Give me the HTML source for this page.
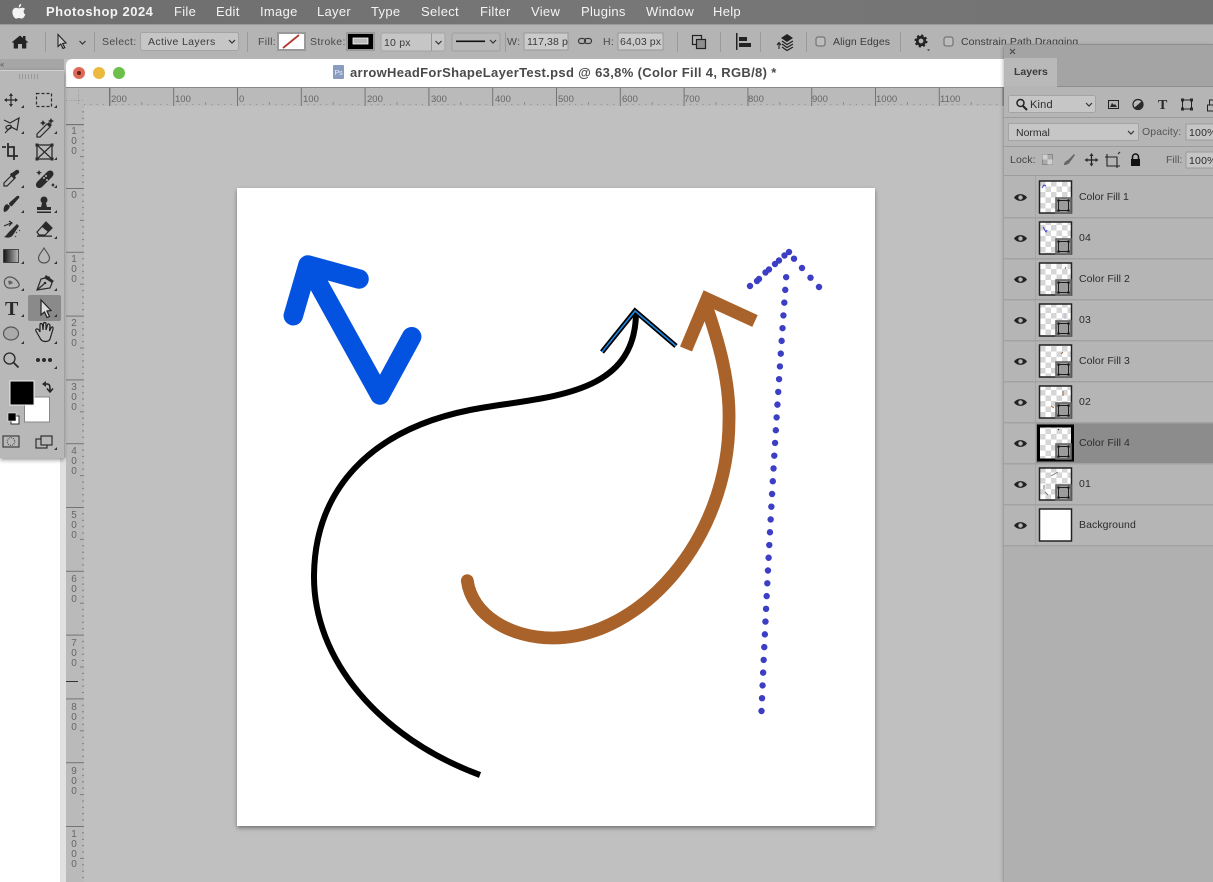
<!DOCTYPE html>
<html><head><meta charset="utf-8"><style>
html,body{margin:0;padding:0;background:#c0c0c0;overflow:hidden}
svg{display:block;position:absolute;left:0;top:0;filter:blur(.3px)}
text{font-family:"Liberation Sans",sans-serif;font-size:10.5px;fill:#333;letter-spacing:.35px}
.m{font-size:13px;fill:#f4f4f4;letter-spacing:.3px}
.r{font-size:9.5px;fill:#666;letter-spacing:0}
.v{font-size:10px;fill:#666;letter-spacing:0;text-anchor:middle}
.o{fill:#3c3c3c}
.l{fill:#2c2c2c;font-size:10.5px;letter-spacing:.2px}
.ic{fill:none;stroke:#2a2a2a;stroke-width:1.2}
.f{fill:#2a2a2a;stroke:none}
</style></head><body>
<svg width="1213" height="882" viewBox="0 0 1213 882" xmlns="http://www.w3.org/2000/svg">
<defs>
<linearGradient id="mb" x1="0" y1="0" x2="1" y2="0"><stop offset="0" stop-color="#6d6d6d"/><stop offset=".5" stop-color="#777"/><stop offset="1" stop-color="#737373"/></linearGradient>
<linearGradient id="gr" x1="0" y1="0" x2="1" y2="0"><stop offset="0" stop-color="#111"/><stop offset="1" stop-color="#bbb"/></linearGradient>
<filter id="sh" x="-5%" y="-5%" width="110%" height="110%"><feDropShadow dx="0" dy="2" stdDeviation="2" flood-color="#000" flood-opacity=".4"/></filter>
<pattern id="ck" x="1040" y="181" width="11" height="11" patternUnits="userSpaceOnUse"><rect width="11" height="11" fill="#fff"/><rect width="5.5" height="5.5" fill="#d6d6d6"/><rect x="5.5" y="5.5" width="5.5" height="5.5" fill="#d6d6d6"/></pattern>
<pattern id="hr" x="237" y="88" width="63.8" height="18" patternUnits="userSpaceOnUse">
<rect x="0" y="0" width="1" height="18" fill="#747474"/>
<g fill="#8a8a8a"><rect x="6.4" y="16" width="1" height="1"/><rect x="12.8" y="16" width="1" height="1"/><rect x="19.1" y="16" width="1" height="1"/><rect x="25.5" y="16" width="1" height="1"/><rect x="31.9" y="14" width="1" height="3"/><rect x="38.3" y="16" width="1" height="1"/><rect x="44.7" y="16" width="1" height="1"/><rect x="51" y="16" width="1" height="1"/><rect x="57.4" y="16" width="1" height="1"/></g></pattern>
<pattern id="vr" x="66" y="188" width="18" height="63.8" patternUnits="userSpaceOnUse">
<rect x="0" y="0" width="18" height="1" fill="#747474"/>
<g fill="#7e7e7e"><rect x="16" y="6.4" width="2" height="1"/><rect x="16" y="12.8" width="2" height="1"/><rect x="16" y="19.1" width="2" height="1"/><rect x="16" y="25.5" width="2" height="1"/><rect x="14" y="31.9" width="4" height="1"/><rect x="16" y="38.3" width="2" height="1"/><rect x="16" y="44.7" width="2" height="1"/><rect x="16" y="51" width="2" height="1"/><rect x="16" y="57.4" width="2" height="1"/></g></pattern>
<g id="mask"><rect x="0" y="0" width="15" height="15" fill="#9c9c9c" stroke="#666" stroke-width="1.6"/><rect x="2.5" y="2.5" width="10" height="10" fill="none" stroke="#1c1c1c" stroke-width="1"/><g fill="#1c1c1c"><circle cx="2.5" cy="2.5" r="1.3"/><circle cx="12.5" cy="2.5" r="1.3"/><circle cx="2.5" cy="12.5" r="1.3"/><circle cx="12.5" cy="12.5" r="1.3"/></g></g>
<path id="eye" d="M-6.5,0C-3.5,-4.5 3.5,-4.5 6.5,0C3.5,4.5 -3.5,4.5 -6.5,0ZM0,-2.2A2.2,2.2 0 1 0 0.01,-2.2Z" fill="#222" fill-rule="evenodd"/>
<path id="cor" d="M0,3L3,3L3,0Z" fill="#333"/>
</defs>

<!-- base -->
<rect width="1213" height="882" fill="#c0c0c0"/>
<rect width="1213" height="24" fill="url(#mb)"/>
<rect y="24" width="1213" height="1" fill="#9a9a9a"/>
<rect y="25" width="1213" height="34" fill="#b4b4b4"/>

<!-- menu -->
<path transform="translate(0,-2)" d="M18.9,9.6C19.9,9.5 21,8.6 21.3,5.8C19.7,6 18.5,7.4 18.9,9.6ZM19,10.4C18,10.4 17.2,9.8 16.2,9.8C14.3,9.8 12.4,11.4 12.4,14.2C12.4,17.4 14.6,20.6 16.2,20.6C17.3,20.6 17.9,20 19,20C20.1,20 20.6,20.6 21.8,20.6C23.3,20.6 24.7,18.2 25.4,16.4C23.3,15.6 23,12 25.1,11C24.3,10 23.1,9.8 22.3,9.8C21,9.8 20,10.4 19,10.4Z" fill="#f4f4f4"/>
<text class="m" x="46" y="16" style="font-weight:700;letter-spacing:.5px">Photoshop 2024</text>
<text class="m" x="174" y="16">File</text>
<text class="m" x="216" y="16">Edit</text>
<text class="m" x="260" y="16">Image</text>
<text class="m" x="317" y="16">Layer</text>
<text class="m" x="371" y="16">Type</text>
<text class="m" x="421" y="16">Select</text>
<text class="m" x="480" y="16">Filter</text>
<text class="m" x="531" y="16">View</text>
<text class="m" x="581" y="16">Plugins</text>
<text class="m" x="646" y="16">Window</text>
<text class="m" x="713" y="16">Help</text>

<!-- options bar -->
<path d="M11.5,42.5L20,35.5L23,38L23,36L25.5,36L25.5,40L28.5,42.5L26.3,42.5L26.3,48.5L22,48.5L22,44L18,44L18,48.5L13.7,48.5L13.7,42.5Z" fill="#222"/>
<g fill="#9a9a9a"><rect x="45" y="32" width="1" height="20"/><rect x="94" y="32" width="1" height="20"/><rect x="247" y="32" width="1" height="20"/><rect x="505" y="32" width="1" height="20"/><rect x="677" y="32" width="1" height="20"/><rect x="720" y="32" width="1" height="20"/><rect x="760" y="32" width="1" height="20"/><rect x="806" y="32" width="1" height="20"/><rect x="900" y="32" width="1" height="20"/></g>
<path d="M58,34.5L58,46.5L60.8,44L63,48.5L64.8,47.6L62.6,43.4L66,43Z" fill="#c8c8c8" stroke="#222" stroke-width="1.1"/>
<path d="M79.5,41L82.5,44L85.5,41" fill="none" stroke="#333" stroke-width="1.2"/>
<text class="o" x="102" y="45" style="fill:#4a4a4a">Select:</text>
<rect x="140.5" y="32.5" width="98" height="18" rx="2" fill="#c6c6c6" stroke="#a4a4a4"/>
<text class="o" x="148" y="45">Active Layers</text>
<path d="M229,40L232,43L235,40" fill="none" stroke="#333" stroke-width="1.2"/>
<text class="o" x="258" y="45" style="fill:#4a4a4a">Fill:</text>
<rect x="277" y="32" width="29" height="19" fill="#999"/><rect x="279" y="34" width="25" height="15" fill="#fff"/><path d="M283,48L299,35" stroke="#b13a32" stroke-width="1.8"/>
<text class="o" x="310" y="45" style="fill:#4a4a4a">Stroke:</text>
<rect x="346" y="32" width="29" height="19" fill="#999"/><rect x="348" y="34" width="25" height="15" fill="#000"/><rect x="353" y="38" width="15" height="6" fill="#bbb" stroke="#fff" stroke-width=".8"/>
<rect x="381" y="33" width="64" height="18" rx="2" fill="#c6c6c6" stroke="#a4a4a4"/><rect x="431" y="33" width="1" height="18" fill="#999"/>
<text class="o" x="384" y="46" style="letter-spacing:.2px">10 px</text>
<path d="M435.5,41L438.5,44L441.5,41" fill="none" stroke="#333" stroke-width="1.2"/>
<rect x="452" y="33" width="48" height="18" rx="2" fill="#b8b8b8" stroke="#a0a0a0"/>
<rect x="456" y="40.5" width="29" height="1.6" fill="#111"/>
<path d="M490,40L493,43L496,40" fill="none" stroke="#333" stroke-width="1.2"/>
<text class="o" x="507" y="45" style="fill:#4a4a4a">W:</text>
<rect x="524" y="33" width="44" height="17" fill="#cbcbcb" stroke="#999"/>
<text class="o" x="527" y="45" style="letter-spacing:.1px">117,38 p</text>
<g fill="none" stroke="#3a3a3a" stroke-width="1.2"><rect x="578.5" y="38.5" width="7" height="5" rx="2.5"/><rect x="584.5" y="38.5" width="7" height="5" rx="2.5"/></g>
<text class="o" x="603" y="45" style="fill:#4a4a4a">H:</text>
<rect x="618" y="33" width="45" height="17" fill="#cbcbcb" stroke="#999"/>
<text class="o" x="620" y="45" style="letter-spacing:.1px">64,03 px</text>
<g stroke="#222" stroke-width="1.2"><rect x="692.5" y="35.5" width="9" height="9" fill="#b4b4b4"/><rect x="696.5" y="39.5" width="9" height="9" fill="#8f8f8f"/></g>
<rect x="736" y="33" width="1.5" height="17" fill="#222"/><rect x="739" y="37" width="8" height="4" fill="#222"/><rect x="739" y="43" width="12" height="4" fill="#222"/>
<path d="M779,49v-6M777,45l2,-2.5l2,2.5" fill="none" stroke="#222" stroke-width="1.1"/>
<g fill="#222"><path d="M787,34L793,38L787,42L781,38Z"/></g><g fill="none" stroke="#222" stroke-width="1.3"><path d="M782,41L787,44.5L793,41M782,44L787,47.5L793,44M782,47L787,50.5L793,47"/></g>
<rect x="816" y="37" width="9" height="9" rx="2" fill="#bcbcbc" stroke="#666"/>
<text class="o" x="833" y="45" style="letter-spacing:.1px">Align Edges</text>
<circle cx="921" cy="41" r="3.8" fill="none" stroke="#222" stroke-width="2.8"/><circle cx="921" cy="41" r="5.6" fill="none" stroke="#222" stroke-width="1.8" stroke-dasharray="2.2 2.2"/>
<path d="M927,49.5L930,49.5L928.5,51Z" fill="#222"/>
<rect x="944" y="37" width="9" height="9" rx="2" fill="#bcbcbc" stroke="#666"/>
<text class="o" x="961" y="45" style="letter-spacing:.1px">Constrain Path Dragging</text>

<!-- left edge + bottom white under tools -->
<rect x="0" y="458" width="66" height="424" fill="#fff"/>
<rect x="60" y="458" width="6" height="424" fill="#e0e0e0"/>

<!-- document bar -->
<path d="M66,87L66,66Q66,59 73,59L1004,59L1004,87Z" fill="#fff"/>
<rect x="66" y="87" width="938" height="1" fill="#888"/>
<circle cx="79" cy="73" r="6" fill="#dc6a58"/><circle cx="79" cy="73" r="2" fill="#6e1d14"/>
<circle cx="99" cy="73" r="6" fill="#ecb940"/>
<circle cx="119" cy="73" r="6" fill="#6cc04a"/>
<rect x="333" y="65" width="11" height="14" rx="1" fill="#8a9cc0"/><text x="334.5" y="75" style="font-size:7px;fill:#e8eefc;letter-spacing:0">Ps</text>
<text x="350" y="77" style="font-size:13px;font-weight:700;fill:#4a4a4a;letter-spacing:.33px">arrowHeadForShapeLayerTest.psd @ 63,8% (Color Fill 4, RGB/8) *</text>

<!-- rulers -->
<rect x="66" y="88" width="938" height="18" fill="#bababa"/>
<rect x="66" y="88" width="18" height="794" fill="#bababa"/>
<rect x="84" y="88" width="920" height="18" fill="url(#hr)"/>
<rect x="66" y="106" width="18" height="776" fill="url(#vr)"/>
<path d="M78.5,90V106M66,100.5H84" stroke="#999" stroke-dasharray="1 1.6"/>
<rect x="109" y="88" width="1" height="18" fill="#747474"/>
<text class="r" x="111" y="102">200</text><text class="r" x="175" y="102">100</text><text class="r" x="239" y="102">0</text><text class="r" x="303" y="102">100</text><text class="r" x="367" y="102">200</text><text class="r" x="431" y="102">300</text><text class="r" x="495" y="102">400</text><text class="r" x="558" y="102">500</text><text class="r" x="622" y="102">600</text><text class="r" x="684" y="102">700</text><text class="r" x="748" y="102">800</text><text class="r" x="812" y="102">900</text><text class="r" x="876" y="102">1000</text><text class="r" x="940" y="102">1100</text>
<rect x="66" y="124" width="18" height="1" fill="#747474"/>
<text class="v" x="74" y="134">1</text><text class="v" x="74" y="144">0</text><text class="v" x="74" y="154">0</text>
<text class="v" x="74" y="198">0</text>
<text class="v" x="74" y="262">1</text><text class="v" x="74" y="272">0</text><text class="v" x="74" y="282">0</text>
<text class="v" x="74" y="326">2</text><text class="v" x="74" y="336">0</text><text class="v" x="74" y="346">0</text>
<text class="v" x="74" y="390">3</text><text class="v" x="74" y="400">0</text><text class="v" x="74" y="410">0</text>
<text class="v" x="74" y="454">4</text><text class="v" x="74" y="464">0</text><text class="v" x="74" y="474">0</text>
<text class="v" x="74" y="518">5</text><text class="v" x="74" y="528">0</text><text class="v" x="74" y="538">0</text>
<text class="v" x="74" y="582">6</text><text class="v" x="74" y="592">0</text><text class="v" x="74" y="602">0</text>
<text class="v" x="74" y="646">7</text><text class="v" x="74" y="656">0</text><text class="v" x="74" y="666">0</text>
<text class="v" x="74" y="710">8</text><text class="v" x="74" y="720">0</text><text class="v" x="74" y="730">0</text>
<text class="v" x="74" y="774">9</text><text class="v" x="74" y="784">0</text><text class="v" x="74" y="794">0</text>
<text class="v" x="74" y="837">1</text><text class="v" x="74" y="847">0</text><text class="v" x="74" y="857">0</text><text class="v" x="74" y="867">0</text>
<rect x="66" y="681" width="12" height="1" fill="#333"/>

<!-- canvas -->
<rect x="237" y="188" width="638" height="638" fill="#fff" filter="url(#sh)"/>
<g fill="none">
<path d="M293.3,315.7L308,265L359,279M308,265L380,395L411.7,336.7" stroke="#0453e0" stroke-width="19.5" stroke-linecap="round" stroke-linejoin="round"/>
<path d="M480,775C380,738 313,660 314,575C315,490 370,430 470,410C540,396 636,400 636,312" stroke="#000" stroke-width="6"/>
<path d="M602,352L635,311L676,346" stroke="#000" stroke-width="5"/>
<path d="M602,352L635,311L676,346" stroke="#1f8ae6" stroke-width="1.5"/>
<path d="M467.3,580.7C472,615 510,638 553,638C640,638 729,540 729,420C730,380 718,340 706,305" stroke="#a9632a" stroke-width="12.8" stroke-linecap="round"/>
<path d="M686,349L707,299L755,321" stroke="#a9632a" stroke-width="13"/>
<path d="M761.5,711Q771,480 787,266" stroke="#3c3ec4" stroke-width="6.4" stroke-linecap="round" stroke-dasharray="0 12.78"/>
</g>
<g fill="#3c3ec4"><circle cx="750" cy="286" r="3.2"/><circle cx="757" cy="281" r="3.2"/><circle cx="759" cy="279" r="3.2"/><circle cx="765.5" cy="272.5" r="3.2"/><circle cx="769" cy="269.5" r="3.2"/><circle cx="775" cy="264" r="3.2"/><circle cx="779" cy="260.5" r="3.2"/><circle cx="784.5" cy="255.5" r="3.2"/><circle cx="789" cy="252" r="3.2"/><circle cx="794" cy="258.7" r="3.2"/><circle cx="802" cy="268" r="3.2"/><circle cx="810.5" cy="277.7" r="3.2"/><circle cx="819" cy="287" r="3.2"/></g>

<!-- tools panel -->
<rect x="0" y="59" width="64" height="11" fill="#a6a6a6"/>
<text x="0" y="67" style="font-size:8px;fill:#555;letter-spacing:-1px">‹‹</text>
<rect x="0" y="70" width="64" height="388" fill="#b8b8b8" filter="url(#sh)"/>
<rect x="0" y="70" width="64" height="1" fill="#d0d0d0"/>
<path d="M19.500,74V79M22.500,74V79M25.500,74V79M28.500,74V79M31.500,74V79M34.500,74V79M37.500,74V79" stroke="#999" stroke-width="1"/>
<rect x="28" y="295" width="33" height="26" rx="2" fill="#8a8a8a"/>
<!-- row1 -->
<path d="M11,94V106M5,100H17" class="ic"/><path d="M11,93L9,96H13ZM11,107L9,104H13ZM4,100L7,98V102ZM18,100L15,98V102Z" class="f"/>
<rect x="36.5" y="93.5" width="15" height="13" fill="none" stroke="#2a2a2a" stroke-width="1.2" stroke-dasharray="3 2"/>
<!-- row2 -->
<path d="M4,120L10,123L19,118L17,130L11,127L5,133M7,126C12,124 13,128 9,129C6,130 5,127 7,126Z" class="ic"/>
<path d="M37,134L47,124L50,127L40,137L37,137Z" class="ic"/><path d="M47,124L49,122L52,125L50,127Z" class="f"/><path d="M43,120L44,122L46,123L44,124L43,126L42,124L40,123L42,122ZM51,118L52,120L54,121L52,122L51,124L50,122L48,121L50,120Z" class="f"/>
<!-- row3 -->
<path d="M2,147H6M8,143V156H18M14,151V160M8,147H14V156" fill="none" stroke="#2a2a2a" stroke-width="1.8"/>
<rect x="37" y="145" width="15" height="14" fill="none" stroke="#2a2a2a" stroke-width="1.3"/><path d="M37,145L52,159M52,145L37,159" class="ic"/>
<g class="f"><rect x="35.5" y="143.5" width="3" height="3"/><rect x="50.5" y="143.500" width="3" height="3"/><rect x="35.5" y="157.5" width="3" height="3"/><rect x="50.5" y="157.5" width="3" height="3"/></g>
<!-- row4 -->
<path d="M4,186L4,183L12,175L15,178L7,186Z" class="ic"/><path d="M12,173L16,170C18,169 20,171 19,173L15,176L16,178L14,179L10,175L11,173Z" class="f"/>
<path d="M37,182L47,172C51,168 56,173 52,177L42,187C38,190 34,186 37,182Z" fill="#2a2a2a"/><g fill="#b8b8b8"><circle cx="44" cy="178" r="1"/><circle cx="47" cy="180" r="1"/><circle cx="46" cy="176" r="1"/></g><path d="M39,170L40,172L42,172.5L40,173.5L39,175.5L38,173.5L36,172.5L38,172ZM53,183L54,184.5L55,185L54,185.5L53,187L52,185.5L51,185L52,184.5Z" class="f"/>
<!-- row5 -->
<path d="M9,203L17,196C19,195 20,197 19,198L12,206C11,207 9,205 9,203Z" class="f"/><path d="M4,212C6,212 9,210 10,206L7,204C4,205 3,209 4,212Z" class="f"/>
<circle cx="44" cy="200" r="3.5" class="f"/><path d="M42,203H46L47,207H51V210H37V207H41Z" class="f"/><rect x="37" y="211.5" width="14" height="1.5" class="f"/>
<!-- row6 -->
<path d="M9,232L17,224L19,226L13,235C11,238 7,238 4,237C6,236 7,234 9,232Z" class="f"/><path d="M4,226L11,223M9,221L12,223L9,226" class="ic"/><path d="M16,232L17,233M19,230L20,231M15,236L16,237" stroke="#444" stroke-width="1"/>
<path d="M37,232L46,222L52,228L45,235L39,235Z" class="ic"/><path d="M42,227L46,222L52,228L48,232Z" class="f"/><rect x="37" y="235.5" width="15" height="1.3" class="f"/>
<!-- row7 -->
<rect x="3.5" y="249.5" width="15" height="13" fill="url(#gr)" stroke="#333" stroke-width=".8"/>
<path d="M44,248C41,253 38.5,255 38.5,258C38.500,261 41,263 44,263C47,263 49.5,261 49.5,258C49.500,255 47,253 44,248Z" fill="none" stroke="#555" stroke-width="1.2"/>
<!-- row8 -->
<path d="M5,285C3,280 6,277 10,277C14,277 18,281 19,284C20,287 16,288 13,288C10,288 7,289 5,285Z" class="ic" style="stroke:#555"/><path d="M8,281C10,280 12,281 13,283L9,285Z" fill="#666"/>
<path d="M37,290L41,279L49,277L52,283L50,288Z" class="ic"/><path d="M46,275L54,281L52,283L44,278Z" class="f"/><path d="M37,290L44,284" class="ic"/><circle cx="45" cy="283" r="1.3" class="f"/>
<!-- row9 -->
<text x="5" y="315" style="font-family:'Liberation Serif',serif;font-size:20px;font-weight:700;fill:#2a2a2a;letter-spacing:0">T</text>
<path d="M41,300L41,315L44.5,312L47,317.5L49.5,316.5L47,311L51,310.5Z" fill="#ddd" stroke="#222" stroke-width="1.2"/>
<!-- row10 -->
<ellipse cx="11" cy="333.500" rx="7.5" ry="6.5" fill="#ababab" stroke="#555" stroke-width="1.2"/>
<path d="M40,338L36,331C35,329 37,328 39,330L40,332L40,325C40,323 42,323 42.5,325L43,330L43.5,324C43.5,322 46,322 46,324L46,330L47.5,325C48,323 50,324 50,326L49.5,331L51,328C52,326 53.5,327 53,329L50,339C49,342 42,343 40,338Z" fill="#bbb" stroke="#222" stroke-width="1.2"/>
<!-- row11 -->
<circle cx="9.5" cy="358.5" r="5.5" fill="none" stroke="#2a2a2a" stroke-width="1.3"/><path d="M13.5,362.5L18.5,367.5" stroke="#2a2a2a" stroke-width="1.8"/>
<circle cx="38" cy="360" r="2" class="f"/><circle cx="44" cy="360" r="2" class="f"/><circle cx="50" cy="360" r="2" class="f"/>
<!-- corners -->
<use href="#cor" x="21" y="105"/><use href="#cor" x="54" y="105"/><use href="#cor" x="21" y="131"/><use href="#cor" x="54" y="131"/><use href="#cor" x="54" y="157"/><use href="#cor" x="21" y="185"/><use href="#cor" x="54" y="185"/><use href="#cor" x="21" y="210"/><use href="#cor" x="54" y="210"/><use href="#cor" x="54" y="236"/><use href="#cor" x="21" y="261"/><use href="#cor" x="54" y="261"/><use href="#cor" x="21" y="288"/><use href="#cor" x="54" y="288"/><use href="#cor" x="21" y="314"/><use href="#cor" x="54" y="314"/><use href="#cor" x="21" y="341"/><use href="#cor" x="54" y="341"/><use href="#cor" x="54" y="366"/>
<!-- swatches -->
<rect x="24.5" y="397" width="25" height="25" fill="#fff" stroke="#888"/>
<rect x="10" y="381" width="24" height="24" fill="#000" stroke="#eee"/>
<path d="M43,384H47C50,384 50,386 50,391M47,388.500L50,392L53,388.500" fill="none" stroke="#222" stroke-width="1.500"/><path d="M46,381V387L42,384Z" class="f"/>
<rect x="11" y="416" width="8" height="8" fill="#fff" stroke="#333"/><rect x="8" y="413" width="8" height="8" fill="#000" stroke="#eee" stroke-width=".6"/>
<rect x="3" y="436" width="16" height="11" fill="none" stroke="#333" stroke-width="1.1"/><circle cx="11" cy="441.5" r="3.8" fill="none" stroke="#444" stroke-dasharray="1 1"/>
<rect x="36" y="439" width="11" height="9" fill="#b8b8b8" stroke="#222" stroke-width="1.1"/><rect x="41" y="436" width="11" height="9" fill="#b8b8b8" stroke="#222" stroke-width="1.1"/>
<use href="#cor" x="54" y="447"/>

<!-- layers panel -->
<g filter="url(#sh)"><rect x="1004" y="44" width="209" height="838" fill="#b5b5b5"/></g>
<rect x="1004" y="44" width="209" height="1" fill="#8e8e8e"/>
<rect x="1004" y="45" width="209" height="13" fill="#a4a4a4"/>
<path d="M1010,49L1015,54M1015,49L1010,54" stroke="#444" stroke-width="1"/>
<rect x="1057" y="58" width="156" height="28" fill="#a4a4a4"/>
<rect x="1004" y="58" width="53" height="28" fill="#b9b9b9"/>
<rect x="1057" y="86" width="156" height="1" fill="#8e8e8e"/>
<text x="1014" y="75" style="font-weight:700;font-size:10.5px;fill:#3c3c3c;letter-spacing:0">Layers</text>
<!-- kind row -->
<rect x="1008.5" y="95.5" width="87" height="17" rx="2" fill="#c6c6c6" stroke="#a4a4a4"/>
<circle cx="1020.5" cy="103" r="3.5" fill="none" stroke="#222" stroke-width="1.5"/><path d="M1023,106L1027,110" stroke="#222" stroke-width="2"/>
<text class="l" x="1030" y="108" style="font-size:11px">Kind</text>
<path d="M1086,103L1089,106L1092,103" fill="none" stroke="#333" stroke-width="1.2"/>
<rect x="1108.5" y="100.5" width="10" height="8" fill="#b5b5b5" stroke="#222"/><path d="M1110,107L1112,103L1114,105L1115,104L1117,107Z" class="f"/>
<circle cx="1138" cy="104.5" r="5" fill="#bbb" stroke="#222" stroke-width="1.2"/><path d="M1142,101L1134,108A5,5 0 0 0 1142,101Z" class="f"/>
<text x="1158" y="109" style="font-family:'Liberation Serif',serif;font-weight:700;font-size:14px;fill:#2a2a2a;letter-spacing:0">T</text>
<rect x="1182.5" y="100" width="9" height="9" fill="none" stroke="#222"/><g class="f"><rect x="1181" y="98.5" width="3" height="3"/><rect x="1190" y="98.5" width="3" height="3"/><rect x="1181" y="107.5" width="3" height="3"/><rect x="1190" y="107.5" width="3" height="3"/></g>
<rect x="1207.5" y="105" width="8" height="6" fill="none" stroke="#222"/><rect x="1209.5" y="100" width="6" height="5" fill="none" stroke="#222"/>
<rect x="1004" y="117" width="209" height="1" fill="#9c9c9c"/>
<!-- blend -->
<rect x="1008.5" y="123.5" width="130" height="17" rx="1" fill="#c6c6c6" stroke="#a4a4a4"/>
<text class="l" x="1016" y="136" style="letter-spacing:0">Normal</text>
<path d="M1128,131L1131,134L1134,131" fill="none" stroke="#333" stroke-width="1.2"/>
<text x="1142" y="135" style="fill:#555;letter-spacing:.1px">Opacity:</text>
<rect x="1186" y="124" width="30" height="16" rx="1" fill="#c6c6c6" stroke="#9c9c9c"/>
<text class="l" x="1189" y="136">100%</text>
<rect x="1004" y="146" width="209" height="1" fill="#9c9c9c"/>
<!-- lock -->
<text x="1010" y="163" style="fill:#444;letter-spacing:.1px">Lock:</text>
<rect x="1042.5" y="154.5" width="10" height="10" fill="#aaa" stroke="#888"/><rect x="1042.5" y="154.5" width="5" height="5" fill="#d0d0d0"/><rect x="1047.5" y="159.5" width="5" height="5" fill="#d0d0d0"/>
<path d="M1064,165C1064,162 1066,161 1068,160L1074,154L1075,155L1070,162C1069,164 1066,165 1064,165Z" fill="#666"/>
<path d="M1091.5,154.5V165M1086,160H1097" stroke="#222" stroke-width="1.2"/><path d="M1091.5,153L1089.5,156H1093.5ZM1091.5,166.5L1089.5,163.5H1093.5ZM1084.5,160L1087.5,158V162ZM1098.5,160L1095.5,158V162Z" class="f"/>
<path d="M1107,154V166H1120M1105,157H1117V168M1118,154L1120,152" fill="none" stroke="#222" stroke-width="1.1"/>
<path d="M1132.5,159V157C1132.5,153 1138.5,153 1138.5,157V159" fill="none" stroke="#111" stroke-width="1.5"/><rect x="1131" y="159" width="9" height="7" fill="#111"/>
<text x="1166" y="163" style="fill:#555;letter-spacing:0">Fill:</text>
<rect x="1186" y="152" width="30" height="16" rx="1" fill="#c6c6c6" stroke="#9c9c9c"/>
<text class="l" x="1189" y="164">100%</text>
<rect x="1004" y="175" width="209" height="1" fill="#9c9c9c"/>

<!-- layer rows -->
<rect x="1036" y="422" width="177" height="41" fill="#8c8c8c"/>
<rect x="1035" y="176" width="1" height="370" fill="#a6a6a6"/>
<g fill="#a2a2a2"><rect x="1004" y="217" width="209" height="1.5"/><rect x="1004" y="258" width="209" height="1.5"/><rect x="1004" y="299" width="209" height="1.5"/><rect x="1004" y="340" width="209" height="1.5"/><rect x="1004" y="381" width="209" height="1.5"/><rect x="1004" y="422" width="209" height="1.5"/><rect x="1004" y="463" width="209" height="1.5"/><rect x="1004" y="504" width="209" height="1.5"/><rect x="1004" y="545" width="209" height="1.5"/></g>
<rect x="1004" y="546.5" width="209" height="336" fill="#b0b0b0"/>
<use href="#eye" x="1020.5" y="197.5"/><use href="#eye" x="1020.5" y="238.5"/><use href="#eye" x="1020.5" y="279.5"/><use href="#eye" x="1020.5" y="320.5"/><use href="#eye" x="1020.5" y="361.5"/><use href="#eye" x="1020.5" y="402.5"/><use href="#eye" x="1020.5" y="443.5"/><use href="#eye" x="1020.5" y="484.5"/><use href="#eye" x="1020.5" y="525.5"/>
<g stroke="#222" stroke-width="1.5" fill="url(#ck)">
<rect x="1039.5" y="181" width="32" height="32"/><rect x="1039.5" y="222" width="32" height="32"/><rect x="1039.5" y="263" width="32" height="32"/><rect x="1039.5" y="304" width="32" height="32"/><rect x="1039.5" y="345" width="32" height="32"/><rect x="1039.5" y="386" width="32" height="32"/><rect x="1039.5" y="468" width="32" height="32"/>
</g>
<rect x="1038.5" y="426" width="34" height="34" fill="url(#ck)" stroke="#000" stroke-width="3"/>
<rect x="1039.5" y="509" width="32" height="32" fill="#fff" stroke="#222" stroke-width="1.5"/>
<use href="#mask" x="1056" y="198"/><use href="#mask" x="1056" y="239"/><use href="#mask" x="1056" y="280"/><use href="#mask" x="1056" y="321"/><use href="#mask" x="1056" y="362"/><use href="#mask" x="1056" y="403"/><use href="#mask" x="1056" y="444"/><use href="#mask" x="1056" y="485"/>
<g fill="none" stroke-width="1"><path d="M1042,188L1044,185L1046,186" stroke="#3c3ec4"/><path d="M1043,227L1046,232L1047,230" stroke="#3c3ec4"/><path d="M1065,269L1066,267" stroke="#6a6acc"/><path d="M1065,313V319" stroke="#b8b8e0"/><path d="M1061,354L1063,352" stroke="#a9632a"/><path d="M1063,391V396M1051,406L1054,408" stroke="#a9632a"/><path d="M1058,430L1059,429" stroke="#222"/><path d="M1058,472L1051,476M1044,485L1044,489M1045,492L1048,495" stroke="#777"/></g>
<text class="l" x="1079" y="200" textLength="50">Color Fill 1</text>
<text class="l" x="1079" y="241">04</text>
<text class="l" x="1079" y="282" textLength="51">Color Fill 2</text>
<text class="l" x="1079" y="323">03</text>
<text class="l" x="1079" y="364" textLength="51">Color Fill 3</text>
<text class="l" x="1079" y="405">02</text>
<text class="l" x="1079" y="446" textLength="51">Color Fill 4</text>
<text class="l" x="1079" y="487">01</text>
<text class="l" x="1079" y="528" textLength="57">Background</text>
</svg>
</body></html>
